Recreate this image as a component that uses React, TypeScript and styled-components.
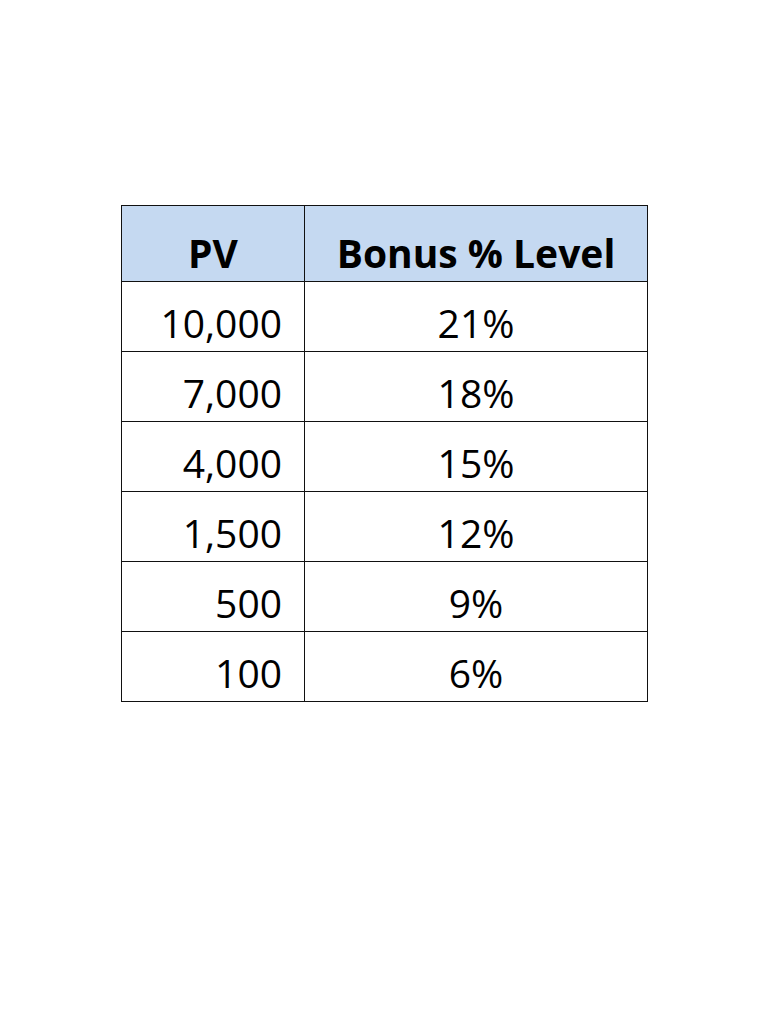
import styled, { createGlobalStyle } from 'styled-components';

const GlobalStyle = createGlobalStyle`
  html, body {
    margin: 0;
    padding: 0;
    background: #ffffff;
  }
  body {
    font-family: "Open Sans", "Liberation Sans", sans-serif;
    color: #000000;
  }
`;

const Page = styled.div`
  width: 768px;
  height: 1024px;
  padding: 205px 0 0 121px;
  box-sizing: border-box;
`;

const Table = styled.table`
  border-collapse: collapse;
  table-layout: fixed;
`;

const HeadCell = styled.th<{ $width: number }>`
  width: ${({ $width }) => $width}px;
  height: 76px;
  padding: 0 0 9px 0;
  box-sizing: border-box;
  background: #c5d9f1;
  border: 1px solid #111;
  font-size: 39px;
  font-weight: 700;
  line-height: 1;
  text-align: center;
  vertical-align: bottom;
`;

const Cell = styled.td<{ $align: 'right' | 'center' }>`
  height: 70px;
  padding: 0 ${({ $align }) => ($align === 'right' ? '22px' : '0')} 9px 0;
  box-sizing: border-box;
  border: 1px solid #111;
  font-size: 39px;
  font-weight: 400;
  line-height: 1;
  text-align: ${({ $align }) => $align};
  vertical-align: bottom;
`;

const rows = [
  { pv: '10,000', bonus: '21%' },
  { pv: '7,000', bonus: '18%' },
  { pv: '4,000', bonus: '15%' },
  { pv: '1,500', bonus: '12%' },
  { pv: '500', bonus: '9%' },
  { pv: '100', bonus: '6%' },
];

export default function App() {
  return (
    <>
      <GlobalStyle />
      <Page>
        <Table>
          <thead>
            <tr>
              <HeadCell $width={183}>PV</HeadCell>
              <HeadCell $width={343}>Bonus % Level</HeadCell>
            </tr>
          </thead>
          <tbody>
            {rows.map((r) => (
              <tr key={r.pv}>
                <Cell $align="right">{r.pv}</Cell>
                <Cell $align="center">{r.bonus}</Cell>
              </tr>
            ))}
          </tbody>
        </Table>
      </Page>
    </>
  );
}
